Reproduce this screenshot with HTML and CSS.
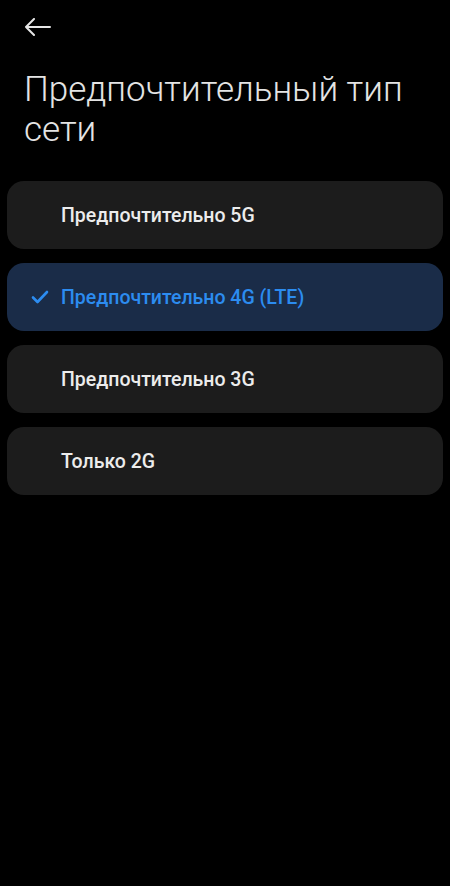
FILE: index.html
```html
<!DOCTYPE html>
<html lang="ru">
<head>
<meta charset="utf-8">
<link rel="stylesheet" href="styles.css">
</head>
<body>
<div class="screen">
  <div class="topbar">
    <svg class="back" width="28" height="18" viewBox="0 0 28 18">
      <path d="M2 9 H26 M10 1 L2 9 L10 17" fill="none" stroke="#e6e6e6" stroke-width="2" stroke-linecap="round" stroke-linejoin="round"/>
    </svg>
  </div>
  <h1 class="title">Предпочтительный тип сети</h1>
  <div class="list">
    <div class="item"><span class="mark"></span><span class="label">Предпочтительно 5G</span></div>
    <div class="item selected"><span class="mark">
      <svg width="18" height="14" viewBox="0 0 18 14"><path d="M2 7.5 L6.5 12 L16 2" fill="none" stroke="#2c8cf0" stroke-width="2.6" stroke-linecap="round" stroke-linejoin="round"/></svg>
    </span><span class="label">Предпочтительно 4G (LTE)</span></div>
    <div class="item"><span class="mark"></span><span class="label">Предпочтительно 3G</span></div>
    <div class="item"><span class="mark"></span><span class="label">Только 2G</span></div>
  </div>
</div>
</body>
</html>
```
FILE: styles.css
```css
html, body {
  margin: 0;
  padding: 0;
  background: #000;
}
body {
  font-family: Roboto, "Noto Sans", sans-serif;
  color: #e8e8e8;
  width: 450px;
  height: 886px;
  overflow: hidden;
}
.screen {
  display: flex;
  flex-direction: column;
}
.topbar {
  height: 52px;
  display: flex;
  align-items: center;
  padding-left: 24px;
}
.back {
  display: block;
  margin-top: 1px;
}
.title {
  margin: 18px 24px 0 24px;
  font-weight: 300;
  font-size: 35px;
  line-height: 40px;
  color: #e4e4e4;
  letter-spacing: 0;
}
.list {
  margin: 31px 7px 0 7px;
  display: flex;
  flex-direction: column;
  gap: 14px;
}
.item {
  height: 68px;
  background: #1c1c1c;
  border-radius: 17px;
  display: flex;
  align-items: center;
}
.item.selected {
  background: #1a2c48;
}
.mark {
  width: 54px;
  display: flex;
  justify-content: flex-end;
  box-sizing: border-box;
}
.mark svg {
  display: block;
  margin-right: 12px;
}
.label {
  font-size: 19.5px;
  font-weight: 500;
  color: #ececec;
}
.selected .label {
  color: #2c8cf0;
}
```
